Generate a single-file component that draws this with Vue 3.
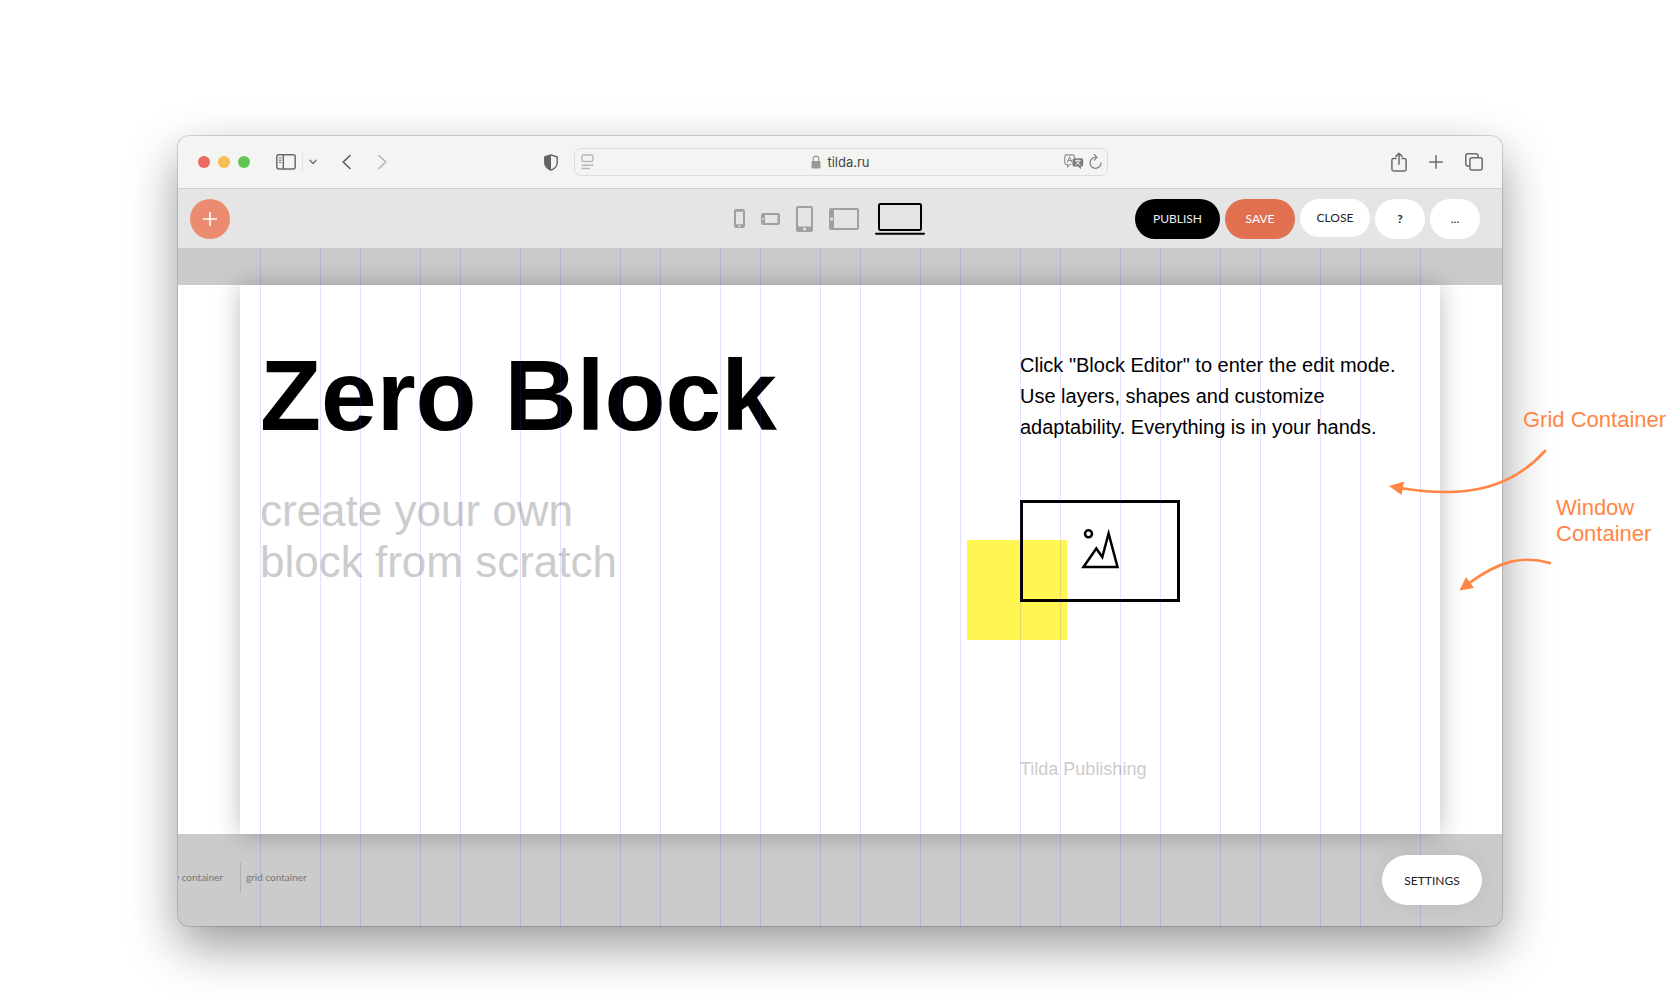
<template>
  <main class="page">
    <div class="stage">
      <section class="browser">
        <header class="toolbar">
          <div class="toolbar-side">
            <div class="lights">
              <span class="light red"></span>
              <span class="light yellow"></span>
              <span class="light green"></span>
            </div>
            <div class="sidebar-tools">
              <button class="icon-btn" aria-label="Sidebar">
                <svg width="20" height="16" viewBox="0 0 20 16" fill="none" stroke="#6b6b69" stroke-width="1.5">
                  <rect x="0.8" y="0.8" width="18.4" height="14.2" rx="2" />
                  <path d="M7.3 1v14" />
                  <path d="M2.8 4h2.6M2.8 6.2h2.6M2.8 8.4h2.6" stroke-width="1" />
                </svg>
              </button>
              <span class="divider"></span>
              <button class="icon-btn" aria-label="Tab groups">
                <svg width="8" height="6" viewBox="0 0 8 6" fill="none" stroke="#777775" stroke-width="1.5" stroke-linecap="round" stroke-linejoin="round">
                  <path d="M1 1.2l3 3.2 3-3.2" />
                </svg>
              </button>
            </div>
            <div class="history">
              <button class="icon-btn" aria-label="Back">
                <svg width="9" height="16" viewBox="0 0 9 16" fill="none" stroke="#5c5c5a" stroke-width="1.6" stroke-linecap="round" stroke-linejoin="round">
                  <path d="M8 1.5L1.2 8 8 14.5" />
                </svg>
              </button>
              <button class="icon-btn" aria-label="Forward">
                <svg width="9" height="16" viewBox="0 0 9 16" fill="none" stroke="#b4b4b2" stroke-width="1.6" stroke-linecap="round" stroke-linejoin="round">
                  <path d="M1 1.5L7.8 8 1 14.5" />
                </svg>
              </button>
            </div>
            <button class="icon-btn shield" aria-label="Privacy report">
              <svg width="14" height="17" viewBox="0 0 14 17">
                <path d="M7 0.8L13.2 3v6c0 3.5-2.6 5.6-6.2 7.2C3.4 14.6 0.8 12.5 0.8 9V3z" fill="none" stroke="#636361" stroke-width="1.4" stroke-linejoin="round" />
                <path d="M7 0.8v15.4C3.4 14.6 0.8 12.5 0.8 9V3z" fill="#636361" />
              </svg>
            </button>
          </div>

          <div class="address">
            <svg class="reader" width="13" height="16" viewBox="0 0 13 16" fill="none" stroke="#b5b5b3" stroke-width="1.4" stroke-linecap="round">
              <rect x="1" y="1" width="11" height="6.5" rx="1.6" />
              <path d="M1 11.2h11M1 14.5h7.5" />
            </svg>
            <div class="host">
              <svg width="10" height="14" viewBox="0 0 10 14">
                <path d="M2.3 6V4a2.7 2.9 0 0 1 5.4 0v2" fill="none" stroke="#9a9a98" stroke-width="1.2" />
                <rect x="0.5" y="6" width="9" height="7.5" rx="1.2" fill="#9a9a98" />
              </svg>
              <span>tilda.ru</span>
            </div>
            <div class="address-actions">
              <button class="icon-btn" aria-label="Translate">
                <svg width="20" height="16" viewBox="0 0 20 16" fill="none" stroke-linejoin="round" stroke-linecap="round">
                  <path d="M7 10.5H5.8L3.5 13v-2.5H2.5A1.7 1.7 0 0 1 0.8 8.8V2.6A1.7 1.7 0 0 1 2.5 0.9h6.2a1.7 1.7 0 0 1 1.7 1.7v1" stroke="#8a8a88" stroke-width="1.1" />
                  <path d="M3.4 8.3l2.2-5.4 2.2 5.4M4.2 6.5h2.8" stroke="#8a8a88" stroke-width="1" />
                  <path d="M10.400 4.200h6.900a1.900 1.900 0 0 1 1.900 1.900v4.600a1.900 1.900 0 0 1-1.900 1.900h-0.400v2.600l-2.600-2.600h-3.900a1.900 1.900 0 0 1-1.900-1.900V6.100a1.900 1.900 0 0 1 1.900-1.900z" fill="#7b7b79" />
                  <path d="M11.400 6.700h5M13.900 5.700v1M15.600 6.900c-0.500 1.800-1.800 3-3.800 3.800M12.300 6.900c0.500 1.800 1.800 3 3.800 3.800" stroke="#f4f4f2" stroke-width="0.9" />
                </svg>
              </button>
              <button class="icon-btn" aria-label="Reload">
                <svg width="13" height="16" viewBox="0 0 13 16" fill="none" stroke="#848482" stroke-width="1.3" stroke-linecap="round" stroke-linejoin="round">
                  <path d="M7.5 3.4H6.5a5.5 5.5 0 1 0 5.5 5.5M5.4 0.8l2.6 2.6-2.6 2.7" />
                </svg>
              </button>
            </div>
          </div>

          <div class="toolbar-side end">
            <button class="icon-btn" aria-label="Share">
              <svg width="16" height="20" viewBox="0 0 16 20" fill="none" stroke="#6b6b69" stroke-width="1.5" stroke-linecap="round" stroke-linejoin="round">
                <path d="M5 6.500H2.600A1.700 1.700 0 0 0 0.900 8.200v9a1.700 1.700 0 0 0 1.700 1.700h10.800a1.700 1.700 0 0 0 1.700-1.700v-9a1.700 1.700 0 0 0-1.700-1.700H11M8 12.200V1.400M4.900 4.400L8 1.300l3.100 3.100" />
              </svg>
            </button>
            <button class="icon-btn" aria-label="New tab">
              <svg width="14" height="14" viewBox="0 0 14 14" stroke="#6b6b69" stroke-width="1.5" stroke-linecap="round">
                <path d="M7 0.8v12.4M0.8 7h12.4" />
              </svg>
            </button>
            <button class="icon-btn" aria-label="Tab overview">
              <svg width="18" height="18" viewBox="0 0 18 18" fill="none" stroke="#6b6b69" stroke-width="1.5">
                <path d="M4.900 13H2.800a2 2 0 0 1-2-2V2.800a2 2 0 0 1 2-2H11a2 2 0 0 1 2 2v2" />
                <rect x="4.9" y="4.8" width="12.3" height="12.3" rx="2" />
              </svg>
            </button>
          </div>
        </header>

        <div class="editor">
          <div class="editor-bar">
            <div class="bar-start">
              <button class="add-btn" aria-label="Add element">
                <svg width="14" height="14" viewBox="0 0 14 14" stroke="#fff" stroke-width="1.6">
                  <path d="M7 0v14M0 7h14" />
                </svg>
              </button>
            </div>

            <nav class="devices" aria-label="Screen size">
              <button class="icon-btn" aria-label="Phone">
                <svg width="11" height="19" viewBox="0 0 11 19">
                  <path fill="#a0a0a0" fill-rule="evenodd" d="M2 0h7a2 2 0 0 1 2 2v15a2 2 0 0 1-2 2H2a2 2 0 0 1-2-2V2a2 2 0 0 1 2-2zM2 2.700v12.600h7V2.700z" />
                  <circle cx="5.5" cy="17" r="1" fill="#e5e5e5" />
                </svg>
              </button>
              <button class="icon-btn" aria-label="Phone, landscape">
                <svg width="19" height="12" viewBox="0 0 19 12">
                  <path fill="#a0a0a0" fill-rule="evenodd" d="M2 0h15a2 2 0 0 1 2 2v8a2 2 0 0 1-2 2H2a2 2 0 0 1-2-2V2a2 2 0 0 1 2-2zM4 2v8h12.500V2z" />
                  <circle cx="2" cy="6" r="1" fill="#e5e5e5" />
                </svg>
              </button>
              <button class="icon-btn" aria-label="Tablet">
                <svg width="17" height="26" viewBox="0 0 17 26">
                  <path fill="#a0a0a0" fill-rule="evenodd" d="M2 0h13a2 2 0 0 1 2 2v22a2 2 0 0 1-2 2H2a2 2 0 0 1-2-2V2a2 2 0 0 1 2-2zM2 2v18.500h13V2z" />
                  <circle cx="8.5" cy="23" r="1.5" fill="#e5e5e5" />
                </svg>
              </button>
              <button class="icon-btn" aria-label="Tablet, landscape">
                <svg width="30" height="22" viewBox="0 0 30 22">
                  <path fill="#a0a0a0" fill-rule="evenodd" d="M2 0h26a2 2 0 0 1 2 2v18a2 2 0 0 1-2 2H2a2 2 0 0 1-2-2V2a2 2 0 0 1 2-2zM5 2v18h23V2z" />
                  <circle cx="2.6" cy="11" r="1.5" fill="#e5e5e5" />
                </svg>
              </button>
              <button class="icon-btn" aria-label="Desktop">
                <svg width="50" height="32" viewBox="0 0 50 32" fill="none" stroke="#000" stroke-width="2">
                  <rect x="4" y="1" width="42" height="26" rx="1.5" />
                  <path d="M1 30.700h48" stroke-linecap="round" />
                </svg>
              </button>
            </nav>

            <div class="bar-end">
              <button class="pill publish">PUBLISH</button>
              <button class="pill save">SAVE</button>
              <button class="pill close">CLOSE</button>
              <button class="pill small help">?</button>
              <button class="pill small">...</button>
            </div>
          </div>

          <div class="window-container">
            <article class="grid-container">
              <div class="intro">
                <h1>Zero Block</h1>
                <p class="subtitle">create your own<br />block from scratch</p>
              </div>
              <div class="details">
                <p class="lead">
                  Click "Block Editor" to enter the edit mode. Use layers, shapes and customize adaptability. Everything is in your hands.
                </p>
                <div class="artwork">
                  <div class="frame">
                    <svg width="39" height="40" viewBox="0 0 39 40" fill="none" stroke="#000" stroke-width="2.5">
                      <circle cx="7.5" cy="4.8" r="3.5" />
                      <path d="M2.500 38L15.300 19.500l6 8.500 6.300-23.500L36.500 38z" />
                    </svg>
                  </div>
                </div>
                <p class="publisher">Tilda Publishing</p>
              </div>
            </article>
          </div>

          <footer class="editor-footer">
            <span class="mark outer">window container</span>
            <span class="mark inner">grid container</span>
            <button class="settings">SETTINGS</button>
          </footer>

          <div class="guides">
            <span v-for="n in 12" :key="n" class="column"></span>
          </div>
        </div>
      </section>

      <svg class="arrows" width="170" height="150" viewBox="0 0 170 150">
        <g fill="none" stroke="#ff8645" stroke-width="2.6" stroke-linecap="round">
          <path d="M157 6C126 40 84 55 12 43" />
          <path d="M162 118C134 110 111 116 80 139" />
        </g>
        <g fill="#ff8645">
          <path d="M1 41L16 36.500 13.500 50z" />
          <path d="M71.500 145.500L78 132l8 11z" />
        </g>
      </svg>
      <span class="note grid-note">Grid Container</span>
      <span class="note window-note">Window<br />Container</span>
    </div>
  </main>
</template>

<script setup>
</script>

<style>
body {
  background: #fff;
  overflow-x: hidden;
}
</style>

<style scoped>
.page {
  padding: 136px 178px 74px;
  font-family: "Liberation Sans", Arial, sans-serif;
  color: #000;
}

.stage {
  position: relative;
}

.browser {
  overflow: hidden;
  border-radius: 11px;
  background: #cbcbcb;
  box-shadow: 0 0 0 1px rgba(0, 0, 0, 0.14), 0 20px 50px rgba(0, 0, 0, 0.4);
}

button {
  border: 0;
  padding: 0;
  cursor: pointer;
}

.icon-btn {
  display: flex;
  background: none;
}

/* browser toolbar */
.toolbar {
  display: flex;
  align-items: center;
  gap: 16px;
  height: 52px;
  padding: 0 19px 0 20px;
  background: #f4f4f2;
  border-bottom: 1px solid #cfcfcd;
}

.toolbar-side {
  display: flex;
  flex: 1;
  align-items: center;
}

.toolbar-side.end {
  justify-content: flex-end;
  gap: 22px;
}

.lights {
  display: flex;
  gap: 8px;
}

.light {
  width: 12px;
  height: 12px;
  border-radius: 50%;
}

.red {
  background: #ec6a5e;
}

.yellow {
  background: #f4bf50;
}

.green {
  background: #61c554;
}

.sidebar-tools {
  display: flex;
  align-items: center;
  gap: 6px;
  margin-left: 26px;
}

.divider {
  width: 1px;
  height: 18px;
  background: #e2e2e0;
}

.history {
  display: flex;
  gap: 27px;
  margin-left: 25px;
}

.shield {
  margin-left: auto;
}

.address {
  display: flex;
  align-items: center;
  flex: 0 1 534px;
  box-sizing: border-box;
  height: 28px;
  padding: 0 5px 0 6px;
  border: 1px solid #dcdcda;
  border-radius: 7px;
}

.reader {
  margin-right: 24px;
}

.host {
  display: flex;
  flex: 1;
  align-items: center;
  justify-content: center;
  gap: 6px;
  font-family: Inter, sans-serif;
  font-size: 13px;
  color: #454543;
}

.address-actions {
  display: flex;
  align-items: center;
  gap: 5px;
}

/* editor */
.editor {
  position: relative;
}

.editor-bar {
  position: relative;
  z-index: 2;
  display: grid;
  grid-template-columns: 1fr auto 1fr;
  align-items: center;
  height: 59px;
  padding: 0 22px 0 12px;
  box-sizing: border-box;
  background: rgba(232, 232, 232, 0.9);
}

.add-btn {
  display: flex;
  align-items: center;
  justify-content: center;
  width: 40px;
  height: 40px;
  border-radius: 50%;
  background: #eb8b70;
}

.devices {
  display: flex;
  align-items: center;
  gap: 16px;
  padding-right: 12px;
}

.bar-end {
  display: flex;
  justify-content: flex-end;
  gap: 5px;
}

.pill {
  width: 70px;
  height: 40px;
  border-radius: 20px;
  background: #fff;
  color: #222;
  font-family: Lato, sans-serif;
  font-size: 12px;
}

.publish {
  width: 85px;
  background: #000;
  color: #eee;
}

.save {
  background: #e07050;
  color: #fff;
}

.close {
  height: 38px;
}

.small {
  width: 50px;
}

.help {
  font-weight: 700;
}

.window-container {
  margin-top: 37px;
  background: #fff;
}

.grid-container {
  display: grid;
  grid-template-columns: 1fr 400px;
  box-sizing: border-box;
  max-width: 1200px;
  margin: 0 auto;
  padding: 60px 20px 51px;
  background: #fff;
  box-shadow: 0 0 24px rgba(0, 0, 0, 0.26);
}

h1 {
  margin: 0;
  font-size: 100px;
  line-height: 100px;
}

.subtitle {
  margin: 40px 0 0;
  font-size: 44px;
  line-height: 51px;
  color: #ccc;
}

.details {
  padding-top: 5px;
}

.lead {
  margin: 0;
  font-size: 20px;
  line-height: 31px;
}

.artwork {
  position: relative;
  width: 160px;
  margin-top: 57px;
}

.artwork::before {
  content: "";
  position: absolute;
  top: 40px;
  left: -53px;
  width: 100px;
  height: 100px;
  background: #fff652;
}

.frame {
  position: relative;
  display: flex;
  align-items: center;
  justify-content: center;
  box-sizing: border-box;
  height: 102px;
  padding-bottom: 4px;
  border: 3px solid #000;
}

.publisher {
  margin: 153px 0 0;
  font-size: 18px;
  line-height: 28px;
  color: #ccc;
}

.editor-footer {
  display: grid;
  grid-template-columns: minmax(62px, calc(50% - 600px)) 1fr auto;
  align-items: center;
  height: 92px;
  padding-right: 20px;
}

.mark {
  margin-bottom: 6px;
  font-family: Lato, sans-serif;
  font-size: 10px;
  line-height: 30px;
  color: #777;
  white-space: nowrap;
}

.outer {
  display: flex;
  justify-content: flex-end;
  padding-right: 17px;
}

.inner {
  padding-left: 5px;
  border-left: 1px solid #b0b0b0;
}

.settings {
  position: relative;
  z-index: 2;
  width: 100px;
  height: 50px;
  border-radius: 25px;
  background: #fff;
  color: #222;
  font-family: Lato, sans-serif;
  font-size: 12px;
  box-shadow: 0 0 20px rgba(0, 0, 0, 0.08);
}

/* column guides lie over the block */
.guides {
  position: absolute;
  inset: 0;
  z-index: 1;
  display: flex;
  gap: 39px;
  width: 1161px;
  margin: 0 auto;
  pointer-events: none;
}

.column {
  flex: 1;
  border: solid rgba(80, 70, 255, 0.16);
  border-width: 0 1px;
}

/* callouts */
.arrows {
  position: absolute;
  top: 309px;
  left: calc(100% - 114px);
  z-index: 3;
}

.note {
  position: absolute;
  z-index: 3;
  font-size: 22px;
  line-height: 26px;
  color: #ff8645;
  white-space: nowrap;
}

.grid-note {
  top: 271px;
  left: calc(100% + 21px);
}

.window-note {
  top: 359px;
  left: calc(100% + 54px);
}
</style>
